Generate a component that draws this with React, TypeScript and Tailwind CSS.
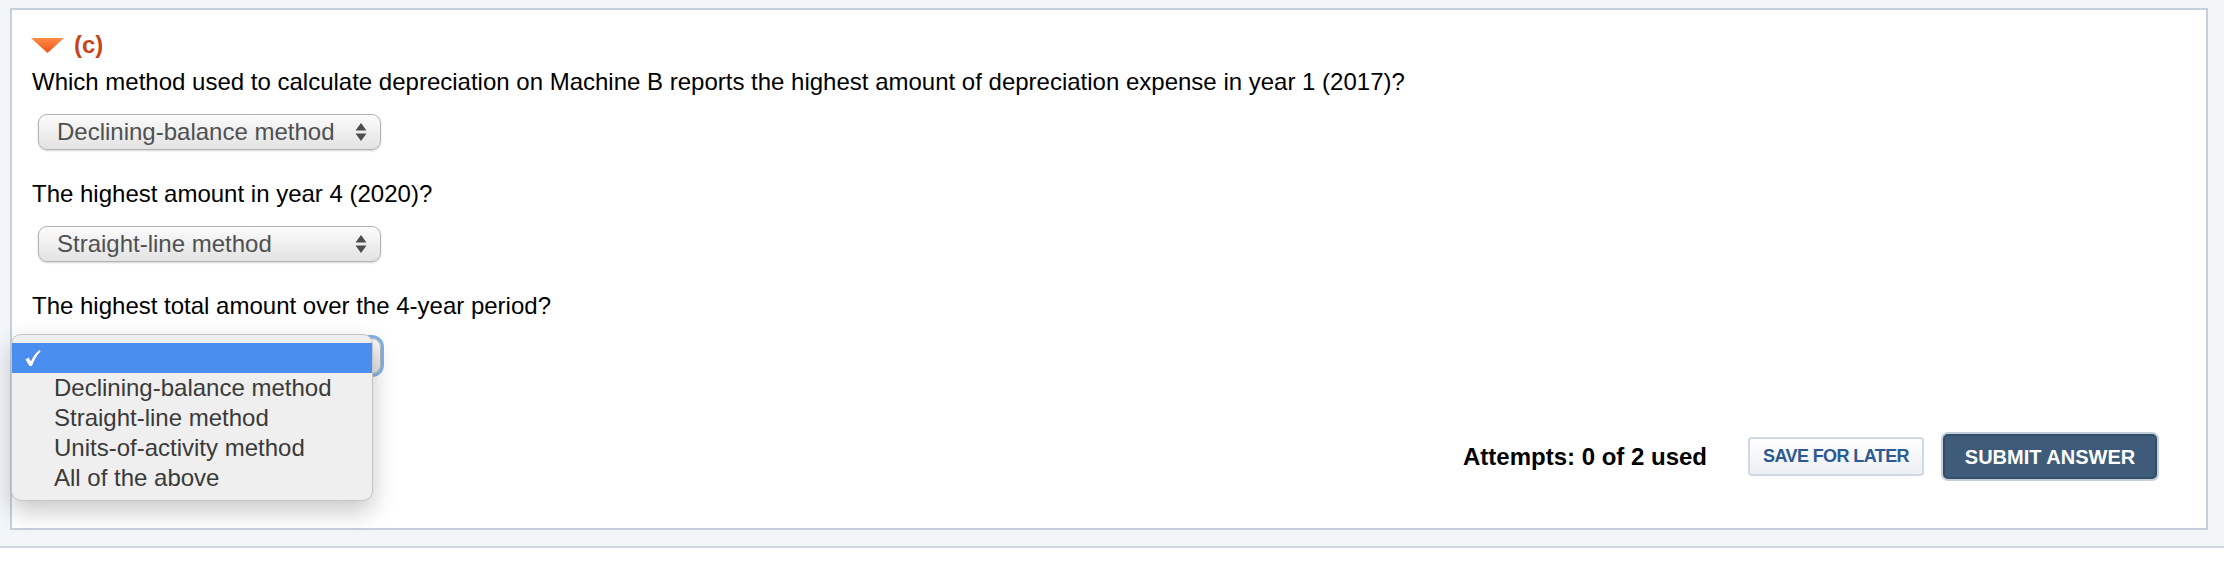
import React from "react";

function Arrows() {
  return (
    <svg width="12" height="22" viewBox="0 0 12 22" className="shrink-0">
      <path d="M0.5 9.5 L11.5 9.5 L6 2 Z" fill="#4d4d4d" />
      <path d="M0.5 12.5 L11.5 12.5 L6 20 Z" fill="#4d4d4d" />
    </svg>
  );
}

function Select({ label, focused }: { label: string; focused?: boolean }) {
  return (
    <div
      className={
        focused
          ? "ml-[6px] w-[343px] h-9 rounded-[9px] border border-[#b3b3b3] bg-gradient-to-b from-[#fbfbfb] to-[#e3e3e3] flex items-center pl-[18px] pr-[13px] text-[24px] text-[#505050] ring-[3px] ring-[#7fb2ef]"
          : "ml-[6px] w-[343px] h-9 rounded-[9px] border border-[#b3b3b3] bg-gradient-to-b from-[#fbfbfb] to-[#e3e3e3] shadow-[0_1px_2px_rgba(0,0,0,0.18)] flex items-center pl-[18px] pr-[13px] text-[24px] text-[#505050]"
      }
    >
      <span className="flex-1 leading-none">{label}</span>
      <Arrows />
    </div>
  );
}

export default function App() {
  const options = [
    "Declining-balance method",
    "Straight-line method",
    "Units-of-activity method",
    "All of the above",
  ];
  return (
    <div className="min-h-[574px] bg-white font-['Liberation_Sans',Arial,sans-serif] text-black">
      <div className="bg-[#f3f6f9] border-b-2 border-[#cdd6e1] pt-2 pl-[10px] pr-4 pb-4">
        <div className="border-2 border-[#c6d0dc] bg-white h-[522px] pl-5 pt-[21px]">
          <div className="flex items-center h-7 gap-[10px] -ml-px">
            <svg width="33" height="15" viewBox="0 0 33 15">
              <defs>
                <linearGradient id="tri" x1="0" y1="0" x2="0" y2="1">
                  <stop offset="0" stopColor="#ff8d45" />
                  <stop offset="1" stopColor="#ef521b" />
                </linearGradient>
              </defs>
              <path d="M0 0 L33 0 L16.5 15 Z" fill="url(#tri)" />
            </svg>
            <span className="text-[24px] font-bold text-[#c8431a] leading-7">(c)</span>
          </div>

          <p className="mt-[9px] text-[24px] leading-7 mb-[18px]">
            Which method used to calculate depreciation on Machine B reports the highest amount of depreciation expense in year 1 (2017)?
          </p>
          <Select label="Declining-balance method" />

          <p className="mt-[30px] text-[24px] leading-7 mb-[18px]">The highest amount in year 4 (2020)?</p>
          <Select label="Straight-line method" />

          <p className="mt-[30px] text-[24px] leading-7 mb-[18px]">The highest total amount over the 4-year period?</p>
          <div className="relative">
            <Select label="" focused />
            <div className="absolute left-[-21px] top-[-4px] w-[362px] rounded-[10px] border border-[#c4c4c4] bg-[#efefef] shadow-[0_10px_24px_rgba(0,0,0,0.22)] pt-[8px] pb-[7px] overflow-hidden z-10">
              <div className="h-[30px] bg-[#4a8ef0] flex items-center pl-[12px]">
                <svg width="17" height="18" viewBox="0 0 17 18">
                  <path
                    d="M1.5 10.5 L4.5 8.5 L7 12.5 C9 7.5 12 3.5 15.5 1 L16.5 2.5 C13 6 10.2 10.5 8 17 L5.5 17 Z"
                    fill="#ffffff"
                  />
                </svg>
              </div>
              {options.map((o) => (
                <div key={o} className="h-[30px] leading-[30px] pl-[42px] text-[24px] text-[#3a3a3a]">
                  {o}
                </div>
              ))}
            </div>
          </div>

          <div className="mt-[60px] flex items-center justify-end pr-[49px]">
            <span className="text-[24px] font-bold mr-[41px]">Attempts: 0 of 2 used</span>
            <button className="h-[39px] w-[176px] rounded-[4px] border-2 border-[#cfd9e5] bg-gradient-to-b from-white to-[#eceff3] text-[#2d5a93] font-bold text-[18px] tracking-[-0.6px] mr-[19px]">
              SAVE FOR LATER
            </button>
            <button className="h-[45px] w-[214px] rounded-[5px] bg-[#3e5b7a] border-2 border-[#334d69] shadow-[0_0_0_2px_#c3cedb] text-white font-bold text-[20px]">
              SUBMIT ANSWER
            </button>
          </div>
        </div>
      </div>
    </div>
  );
}
